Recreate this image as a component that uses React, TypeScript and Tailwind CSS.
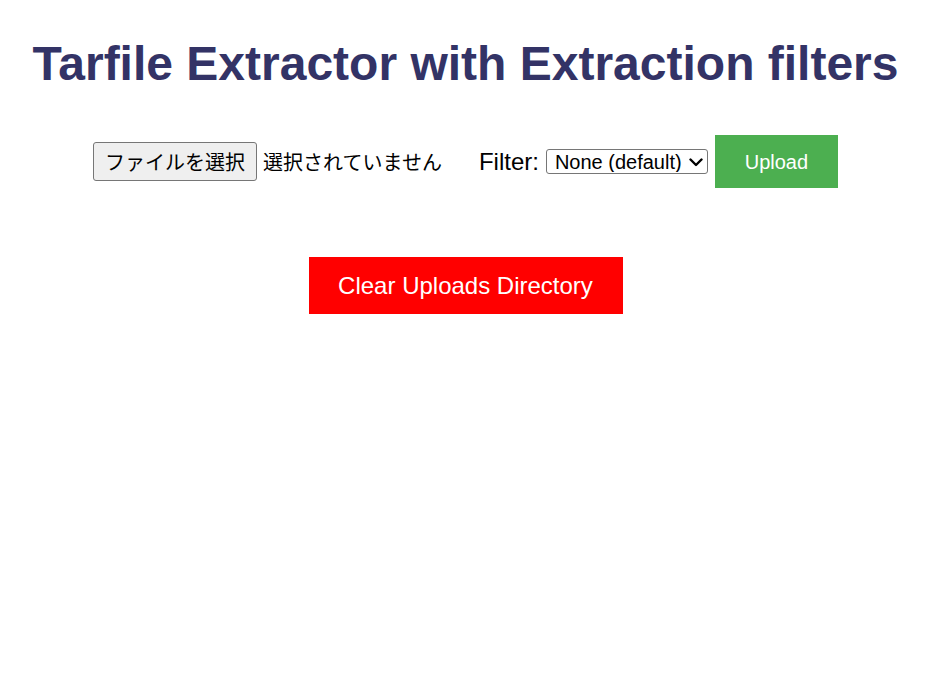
import { useState } from "react";

export default function App() {
  const [filter, setFilter] = useState("none");

  return (
    <div className="min-h-screen bg-white font-['Liberation_Sans',Arial,sans-serif] text-black">
      <h1 className="pt-[36px] text-center text-[48px] font-bold leading-[55px] text-[#333366]">
        Tarfile Extractor with Extraction filters
      </h1>

      <form
        className="mt-[44px] flex items-center justify-center"
        onSubmit={(e) => e.preventDefault()}
      >
        <label className="flex cursor-default items-center">
          <input type="file" className="hidden" />
          <span className="flex h-[39px] w-[164px] items-center justify-center rounded-[3px] border border-[#767676] bg-[#efefef] font-['Noto_Sans_CJK_JP',sans-serif] text-[20px] leading-none">
            ファイルを選択
          </span>
          <span className="ml-[6px] font-['Noto_Sans_CJK_JP',sans-serif] text-[20px] leading-none">
            選択されていません
          </span>
        </label>

        <span className="ml-[37px] text-[24px] leading-none">Filter:</span>

        <div className="relative ml-[7px]">
          <select
            value={filter}
            onChange={(e) => setFilter(e.target.value)}
            className="block h-[25px] w-[162px] appearance-none rounded-[3px] border border-[#767676] bg-white pl-[8px] text-[20px] leading-none outline-none"
          >
            <option value="none">None (default)</option>
            <option value="data">data</option>
            <option value="tar">tar</option>
            <option value="fully_trusted">fully_trusted</option>
          </select>
          <svg
            className="pointer-events-none absolute right-[5px] top-[9px]"
            width="14"
            height="9"
            viewBox="0 0 14 9"
            fill="none"
          >
            <polyline
              points="1.5,1.5 7,7 12.5,1.5"
              stroke="black"
              strokeWidth="2.4"
              strokeLinecap="round"
              strokeLinejoin="round"
            />
          </svg>
        </div>

        <button
          type="submit"
          className="ml-[7px] flex h-[53px] w-[123px] items-center justify-center bg-[#4CAF50] text-[20px] text-white"
        >
          Upload
        </button>
      </form>

      <div className="mt-[69px] flex justify-center">
        <button
          type="button"
          className="flex h-[57px] w-[314px] items-center justify-center bg-[#ff0000] text-[24px] text-white"
        >
          Clear Uploads Directory
        </button>
      </div>
    </div>
  );
}
